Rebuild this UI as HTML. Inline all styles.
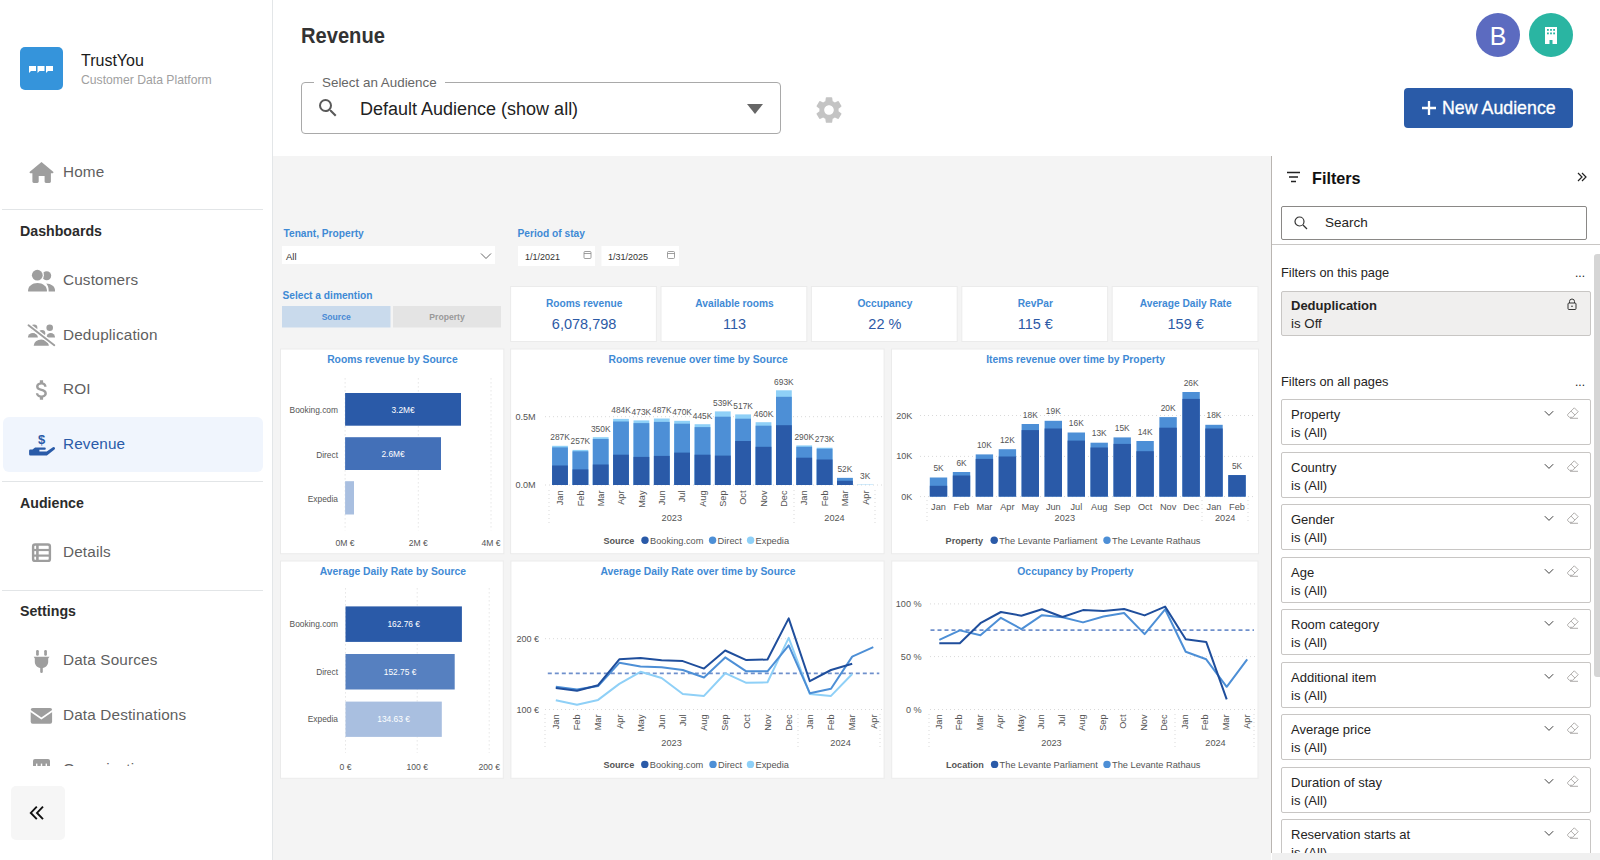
<!DOCTYPE html>
<html><head><meta charset="utf-8">
<style>
*{box-sizing:border-box;margin:0;padding:0}
html,body{width:1600px;height:860px;overflow:hidden;background:#fff;font-family:"Liberation Sans",sans-serif;position:relative}
.a{position:absolute}
.nav{position:absolute;left:63px;font-size:15.3px;letter-spacing:0.15px;color:#5f5f5f;line-height:18px;white-space:nowrap}
.sec{position:absolute;left:20px;font-size:14.2px;font-weight:bold;color:#2b2b2b;line-height:18px}
.div{position:absolute;left:2px;width:261px;height:1px;background:#e2e5e7}
.ico{position:absolute;fill:#9e9e9e}
.fcard{position:absolute;left:1281px;width:310px;height:46px;border:1px solid #c8c6c4;border-radius:2px;background:#fff}
.fcard .t{position:absolute;left:9px;top:6.5px;font-size:13px;color:#252423;line-height:16px;white-space:nowrap}
.fcard .s{position:absolute;left:9px;top:24.5px;font-size:13px;color:#252423;line-height:16px;white-space:nowrap}
.fcard svg{position:absolute}
.kpi{position:absolute;top:286px;width:146px;height:55px;background:#fff;border:1px solid #e8e8e8}
.kpi .t{position:absolute;left:0;right:0;top:11px;text-align:center;font-size:10.3px;font-weight:bold;color:#3f8ad5;line-height:12px}
.kpi .v{position:absolute;left:0;right:0;top:29px;text-align:center;font-size:14.5px;color:#2c5aa6;line-height:17px}
.panel{position:absolute;background:#fff;border:1px solid #e6e6e6}
</style></head><body>
<!-- SIDEBAR -->
<div class="a" style="left:0;top:0;width:272px;height:860px;background:#fff"></div>
<div class="a" style="left:272px;top:0;width:1px;height:860px;background:#e3e6e8"></div>
<div class="a" style="left:20px;top:47px;width:43px;height:43px;border-radius:5px;background:#3594db"></div>
<svg class="a" style="left:20px;top:47px" width="43" height="43" viewBox="0 0 43 43">
<g fill="#fff"><path d="M9 19h7v5h-5l-2 2z"/><path d="M17.5 19h7v5h-5l-2 2z"/><path d="M26 19h7v5h-5l-2 2z"/></g></svg>
<div class="a" style="left:81px;top:52px;font-size:16px;color:#1b1b1b;line-height:18px">TrustYou</div>
<div class="a" style="left:81px;top:73px;font-size:12.2px;color:#a0a0a0;line-height:14px">Customer Data Platform</div>

<svg class="ico" style="left:22px;top:155px" width="38" height="35" viewBox="0 0 38 35"><path d="M19.5 6.9L31.2 16.8c.5.5.2 1.4-.5 1.4H28.9V26.6c0 .8-.6 1.4-1.4 1.4h-3.5c-.8 0-1.4-.6-1.4-1.4V20.9h-5.9V26.6c0 .8-.6 1.4-1.4 1.4h-3.5c-.8 0-1.4-.6-1.4-1.4V18.2H8.3c-.7 0-1-.9-.5-1.4z"/></svg>
<div class="nav" style="top:163px">Home</div>
<div class="div" style="top:209px"></div>
<div class="sec" style="top:222px">Dashboards</div>

<svg class="ico" style="left:22px;top:262px" width="40" height="36" viewBox="0 0 40 36"><circle cx="24.7" cy="13.8" r="4.5"/><circle cx="15.3" cy="13.2" r="6.6" fill="#fff"/><circle cx="15.3" cy="13.2" r="5.4"/><path d="M6.1 29.5v-1.2c0-4.1 4.2-7.4 9.4-7.4s9.4 3.3 9.4 7.4v1.2z"/><path d="M24.3 21.5c4.6.3 8.7 2.7 8.7 6.5v1.5h-6.4v-1.5c0-2.5-.8-4.8-2.3-6.5z"/></svg>
<div class="nav" style="top:271px">Customers</div>

<svg class="ico" style="left:22px;top:318px" width="40" height="34" viewBox="0 0 40 34"><circle cx="12.1" cy="9.9" r="3.3"/><circle cx="27.7" cy="9.7" r="3.3"/><circle cx="20" cy="15.2" r="3.3"/><path d="M5.9 19.6a5 4.6 0 0 1 10 0z"/><path d="M24.5 19.6a4.25 4.6 0 0 1 8.5 0z"/><path d="M11.7 27.7a7.6 6.2 0 0 1 15.2 0z"/><line x1="6.3" y1="7.1" x2="32.4" y2="27.3" stroke="#fff" stroke-width="4.6"/><line x1="6.5" y1="7.3" x2="32.3" y2="27.2" stroke="#9e9e9e" stroke-width="1.9" stroke-linecap="round"/></svg>
<div class="nav" style="top:326px">Deduplication</div>

<svg class="ico" style="left:29px;top:376px" width="26" height="28" viewBox="0 0 24 24"><path d="M11.8 10.9c-2.27-.59-3-1.2-3-2.15 0-1.09 1.01-1.85 2.7-1.85 1.78 0 2.44.85 2.5 2.1h2.21c-.07-1.72-1.12-3.3-3.21-3.81V3h-3v2.16c-1.94.42-3.5 1.68-3.5 3.61 0 2.31 1.91 3.46 4.7 4.13 2.5.6 3 1.48 3 2.41 0 .69-.49 1.79-2.7 1.79-2.06 0-2.87-.92-2.98-2.1h-2.2c.12 2.19 1.76 3.42 3.68 3.83V21h3v-2.15c1.95-.37 3.5-1.5 3.5-3.55 0-2.84-2.43-3.81-4.7-4.4z"/></svg>
<div class="nav" style="top:380px">ROI</div>

<div class="a" style="left:3px;top:417px;width:260px;height:55px;border-radius:6px;background:#f0f5fd"></div>
<svg class="a" style="left:24px;top:428px" width="36" height="34" viewBox="0 0 36 34"><g fill="#2a5ba8"><path d="M5.1 22.8q0-1.2 1.2-1.2h2.2l2.6-2h9.6a1.1 1.1 0 0 1 0 2.2h-5.3v1.8h7.3l6.2-4.3a1.3 1.3 0 0 1 1.6 2.1l-7.6 6.1h-16.6q-1.2 0-1.2-1.2z"/><text x="17.5" y="15.6" font-family="Liberation Sans" font-weight="bold" font-size="13" text-anchor="middle">$</text></g></svg>
<div class="nav" style="top:435px;color:#2a5ba8">Revenue</div>
<div class="div" style="top:481px"></div>
<div class="sec" style="top:494px">Audience</div>

<svg class="a" style="left:24px;top:536px" width="36" height="34" viewBox="0 0 36 34"><g fill="none" stroke="#9e9e9e"><rect x="9.1" y="8.5" width="16.8" height="16.4" rx="2" stroke-width="2.4"/><line x1="13.4" y1="8.3" x2="13.4" y2="25.1" stroke-width="2.6"/><line x1="8.9" y1="14" x2="26.1" y2="14" stroke-width="2.2"/><line x1="8.9" y1="19.6" x2="26.1" y2="19.6" stroke-width="2.2"/></g></svg>
<div class="nav" style="top:543px">Details</div>
<div class="div" style="top:590px"></div>
<div class="sec" style="top:602px">Settings</div>

<svg class="ico" style="left:24px;top:644px" width="36" height="34" viewBox="0 0 36 34"><rect x="12.1" y="6.1" width="2.7" height="5.6" rx="1.2"/><rect x="20.2" y="6.1" width="2.7" height="5.6" rx="1.2"/><path d="M9.7 12.8h15.8l-1.3 1.8v3.2c0 3.3-2.5 5.9-5.4 6.3v3.6a1.3 1.3 0 0 1-2.6 0v-3.6c-2.9-.4-5.4-3-5.4-6.3v-3.2z"/></svg>
<div class="nav" style="top:651px">Data Sources</div>
<svg class="ico" style="left:24px;top:698px" width="36" height="34" viewBox="0 0 36 34"><rect x="6.7" y="9.9" width="21.4" height="15.8" rx="2"/><polyline points="5.5,12.2 17.4,20.5 29.3,12.2" fill="none" stroke="#fff" stroke-width="1.7"/></svg>
<div class="nav" style="top:706px">Data Destinations</div>
<div class="a" style="left:0;top:750px;width:272px;height:16px;overflow:hidden">
<svg class="ico" style="left:33px;top:9.4px" width="17" height="10" viewBox="0 0 17 10"><path d="M0 2a2 2 0 0 1 2-2h13a2 2 0 0 1 2 2v8H0z"/><rect x="3" y="4.6" width="1.4" height="6" fill="#fff"/><rect x="7.8" y="4.6" width="1.4" height="6" fill="#fff"/><rect x="12.6" y="4.6" width="1.4" height="6" fill="#fff"/></svg>
<div class="nav" style="top:10px">Organization</div>
</div>
<div class="a" style="left:11px;top:786px;width:54px;height:54px;border-radius:5px;background:#f6f6f6"></div>
<svg class="a" style="left:26px;top:801px" width="24" height="24" viewBox="0 0 24 24"><path d="M10.8 5.6 4.8 11.9l6 6.3M17 5.6l-6 6.3 6 6.3" fill="none" stroke="#111" stroke-width="1.9"/></svg>

<!-- HEADER -->
<div class="a" style="left:301px;top:23px;font-size:22px;font-weight:bold;color:#333;line-height:26px;transform:scaleX(0.915);transform-origin:0 0">Revenue</div>
<div class="a" style="left:301px;top:82px;width:480px;height:52px;border:1px solid #a9a9a9;border-radius:4px"></div>
<div class="a" style="left:314px;top:76px;height:14px;background:#fff;padding:0 8px;font-size:13.4px;color:#666;line-height:14px">Select an Audience</div>
<svg class="a" style="left:316px;top:96px" width="24" height="24" viewBox="0 0 24 24"><path d="M15.5 14h-.79l-.28-.27A6.47 6.47 0 0 0 16 9.5 6.5 6.5 0 1 0 9.5 16c1.61 0 3.09-.59 4.23-1.57l.27.28v.79l5 4.99L20.49 19zm-6 0C7.01 14 5 11.99 5 9.5S7.01 5 9.5 5 14 7.01 14 9.5 11.99 14 9.5 14z" fill="#5a5a5a"/></svg>
<div class="a" style="left:360px;top:99px;font-size:18px;color:#222;line-height:20px">Default Audience (show all)</div>
<svg class="a" style="left:746px;top:104px" width="18" height="11" viewBox="0 0 18 11"><path d="M1 0h16L9 10z" fill="#666"/></svg>
<svg class="a" style="left:813px;top:94px" width="32" height="32" viewBox="0 0 24 24"><path fill="#c4c4c4" d="M19.14 12.94c.04-.3.06-.61.06-.94 0-.32-.02-.64-.07-.94l2.03-1.58a.49.49 0 0 0 .12-.61l-1.92-3.32a.488.488 0 0 0-.59-.22l-2.39.96c-.5-.38-1.03-.7-1.62-.94l-.36-2.54a.484.484 0 0 0-.48-.41h-3.84c-.24 0-.43.17-.47.41l-.36 2.54c-.59.24-1.13.57-1.62.94l-2.39-.96a.49.49 0 0 0-.59.22L2.74 8.87c-.12.21-.08.47.12.61l2.03 1.58c-.05.3-.09.63-.09.94s.02.64.07.94l-2.03 1.58a.49.49 0 0 0-.12.61l1.92 3.32c.12.22.37.29.59.22l2.39-.96c.5.38 1.03.7 1.62.94l.36 2.54c.05.24.24.41.48.41h3.84c.24 0 .44-.17.47-.41l.36-2.54c.59-.24 1.13-.56 1.62-.94l2.39.96c.22.08.47 0 .59-.22l1.92-3.32c.12-.22.07-.47-.12-.61zM12 15.6c-1.98 0-3.6-1.62-3.6-3.6s1.62-3.6 3.6-3.6 3.6 1.62 3.6 3.6-1.62 3.6-3.6 3.6z"/></svg>

<div class="a" style="left:1476px;top:13px;width:44px;height:44px;border-radius:50%;background:#5c6bc0;color:#fff;font-size:25px;line-height:46px;text-align:center">B</div>
<div class="a" style="left:1529px;top:13px;width:44px;height:44px;border-radius:50%;background:#2ab5a2"></div>
<svg class="a" style="left:1542px;top:26px" width="18" height="18" viewBox="0 0 18 18"><path fill="#fff" d="M3 1h12v17h-4.5v-4h-3v4H3z"/><g fill="#2ab5a2"><rect x="5" y="3" width="1.8" height="1.8"/><rect x="8.1" y="3" width="1.8" height="1.8"/><rect x="11.2" y="3" width="1.8" height="1.8"/><rect x="5" y="6.5" width="1.8" height="1.8"/><rect x="8.1" y="6.5" width="1.8" height="1.8"/><rect x="11.2" y="6.5" width="1.8" height="1.8"/></g></svg>

<div class="a" style="left:1404px;top:88px;width:169px;height:40px;border-radius:4px;background:#2a5ba8"></div>
<svg class="a" style="left:1421px;top:99px" width="16" height="18" viewBox="0 0 16 18"><path d="M8 2v14M1 9h14" stroke="#fff" stroke-width="2.3"/></svg>
<div class="a" style="left:1442px;top:98px;font-size:17.8px;color:#fff;line-height:20px;font-weight:normal;-webkit-text-stroke:0.3px #fff">New Audience</div>

<!-- DASHBOARD BG -->
<div class="a" style="left:273px;top:156px;width:998px;height:704px;background:#f4f4f4"></div>

<!-- FILTER PANE -->
<div class="a" style="left:1271px;top:156px;width:1px;height:697px;background:#b9b5b1"></div>
<svg class="a" style="left:1286px;top:171px" width="16" height="13" viewBox="0 0 16 13"><path d="M1 1.5h13M3 6h9M5 10.5h5" stroke="#222" stroke-width="1.6"/></svg>
<div class="a" style="left:1312px;top:168px;font-size:16.2px;font-weight:bold;color:#111;line-height:20px">Filters</div>
<svg class="a" style="left:1576px;top:171px" width="12" height="12" viewBox="0 0 12 12"><path d="M2 2l4 4-4 4M6 2l4 4-4 4" fill="none" stroke="#222" stroke-width="1.2"/></svg>
<div class="a" style="left:1281px;top:206px;width:306px;height:34px;border:1px solid #8a8886;border-radius:2px"></div>
<svg class="a" style="left:1294px;top:216px" width="14" height="14" viewBox="0 0 14 14"><circle cx="5.5" cy="5.5" r="4.5" fill="none" stroke="#333" stroke-width="1.2"/><path d="M9 9l4 4" stroke="#333" stroke-width="1.3"/></svg>
<div class="a" style="left:1325px;top:214px;font-size:13.5px;color:#252423;line-height:17px">Search</div>
<div class="a" style="left:1272px;top:244px;width:328px;height:1px;background:#c8c6c4"></div>
<div class="a" style="left:1281px;top:265px;font-size:12.8px;color:#252423;line-height:16px">Filters on this page</div>
<div class="a" style="left:1575px;top:265px;font-size:12px;color:#252423;line-height:16px">...</div>
<div class="a" style="left:1281px;top:291px;width:310px;height:45px;border:1px solid #c8c6c4;border-radius:2px;background:#f0efee"></div>
<div class="a" style="left:1291px;top:298px;font-size:13px;font-weight:bold;color:#252423;line-height:16px">Deduplication</div>
<div class="a" style="left:1291px;top:316px;font-size:13.3px;color:#252423;line-height:16px">is Off</div>
<svg class="a" style="left:1566px;top:298px" width="12" height="12" viewBox="0 0 12 12"><path d="M3.5 5V3.5a2.5 2.5 0 0 1 5 0V5" fill="none" stroke="#333" stroke-width="1"/><rect x="2" y="5" width="8" height="6.5" rx="1" fill="none" stroke="#333" stroke-width="1"/><circle cx="6" cy="8.2" r=".8" fill="#333"/></svg>
<div class="a" style="left:1281px;top:374px;font-size:12.8px;color:#252423;line-height:16px">Filters on all pages</div>
<div class="a" style="left:1575px;top:374px;font-size:12px;color:#252423;line-height:16px">...</div>
<div class="a" style="left:1272px;top:245px;width:320px;height:608px;overflow:hidden">
<div class="fcard" style="left:9px;top:154px"><div class="t">Property</div><div class="s">is (All)</div><svg style="left:261px;top:7px" width="12" height="12" viewBox="0 0 12 12"><path d="M1.8 4.2l4.2 4.2 4.2-4.2" fill="none" stroke="#333" stroke-width="0.95"/></svg><svg style="left:284px;top:6px" width="14" height="14" viewBox="0 0 14 14"><path d="M8.3 1.8l3.9 3.9-5.6 5.6H3.4L1.8 9.7c-.4-.4-.4-1 0-1.4zM5 5.1l3.9 3.9M4 12.3h8" fill="none" stroke="#9a9896" stroke-width="0.8"/></svg></div>
<div class="fcard" style="left:9px;top:207px"><div class="t">Country</div><div class="s">is (All)</div><svg style="left:261px;top:7px" width="12" height="12" viewBox="0 0 12 12"><path d="M1.8 4.2l4.2 4.2 4.2-4.2" fill="none" stroke="#333" stroke-width="0.95"/></svg><svg style="left:284px;top:6px" width="14" height="14" viewBox="0 0 14 14"><path d="M8.3 1.8l3.9 3.9-5.6 5.6H3.4L1.8 9.7c-.4-.4-.4-1 0-1.4zM5 5.1l3.9 3.9M4 12.3h8" fill="none" stroke="#9a9896" stroke-width="0.8"/></svg></div>
<div class="fcard" style="left:9px;top:259px"><div class="t">Gender</div><div class="s">is (All)</div><svg style="left:261px;top:7px" width="12" height="12" viewBox="0 0 12 12"><path d="M1.8 4.2l4.2 4.2 4.2-4.2" fill="none" stroke="#333" stroke-width="0.95"/></svg><svg style="left:284px;top:6px" width="14" height="14" viewBox="0 0 14 14"><path d="M8.3 1.8l3.9 3.9-5.6 5.6H3.4L1.8 9.7c-.4-.4-.4-1 0-1.4zM5 5.1l3.9 3.9M4 12.3h8" fill="none" stroke="#9a9896" stroke-width="0.8"/></svg></div>
<div class="fcard" style="left:9px;top:312px"><div class="t">Age</div><div class="s">is (All)</div><svg style="left:261px;top:7px" width="12" height="12" viewBox="0 0 12 12"><path d="M1.8 4.2l4.2 4.2 4.2-4.2" fill="none" stroke="#333" stroke-width="0.95"/></svg><svg style="left:284px;top:6px" width="14" height="14" viewBox="0 0 14 14"><path d="M8.3 1.8l3.9 3.9-5.6 5.6H3.4L1.8 9.7c-.4-.4-.4-1 0-1.4zM5 5.1l3.9 3.9M4 12.3h8" fill="none" stroke="#9a9896" stroke-width="0.8"/></svg></div>
<div class="fcard" style="left:9px;top:364px"><div class="t">Room category</div><div class="s">is (All)</div><svg style="left:261px;top:7px" width="12" height="12" viewBox="0 0 12 12"><path d="M1.8 4.2l4.2 4.2 4.2-4.2" fill="none" stroke="#333" stroke-width="0.95"/></svg><svg style="left:284px;top:6px" width="14" height="14" viewBox="0 0 14 14"><path d="M8.3 1.8l3.9 3.9-5.6 5.6H3.4L1.8 9.7c-.4-.4-.4-1 0-1.4zM5 5.1l3.9 3.9M4 12.3h8" fill="none" stroke="#9a9896" stroke-width="0.8"/></svg></div>
<div class="fcard" style="left:9px;top:417px"><div class="t">Additional item</div><div class="s">is (All)</div><svg style="left:261px;top:7px" width="12" height="12" viewBox="0 0 12 12"><path d="M1.8 4.2l4.2 4.2 4.2-4.2" fill="none" stroke="#333" stroke-width="0.95"/></svg><svg style="left:284px;top:6px" width="14" height="14" viewBox="0 0 14 14"><path d="M8.3 1.8l3.9 3.9-5.6 5.6H3.4L1.8 9.7c-.4-.4-.4-1 0-1.4zM5 5.1l3.9 3.9M4 12.3h8" fill="none" stroke="#9a9896" stroke-width="0.8"/></svg></div>
<div class="fcard" style="left:9px;top:469px"><div class="t">Average price</div><div class="s">is (All)</div><svg style="left:261px;top:7px" width="12" height="12" viewBox="0 0 12 12"><path d="M1.8 4.2l4.2 4.2 4.2-4.2" fill="none" stroke="#333" stroke-width="0.95"/></svg><svg style="left:284px;top:6px" width="14" height="14" viewBox="0 0 14 14"><path d="M8.3 1.8l3.9 3.9-5.6 5.6H3.4L1.8 9.7c-.4-.4-.4-1 0-1.4zM5 5.1l3.9 3.9M4 12.3h8" fill="none" stroke="#9a9896" stroke-width="0.8"/></svg></div>
<div class="fcard" style="left:9px;top:522px"><div class="t">Duration of stay</div><div class="s">is (All)</div><svg style="left:261px;top:7px" width="12" height="12" viewBox="0 0 12 12"><path d="M1.8 4.2l4.2 4.2 4.2-4.2" fill="none" stroke="#333" stroke-width="0.95"/></svg><svg style="left:284px;top:6px" width="14" height="14" viewBox="0 0 14 14"><path d="M8.3 1.8l3.9 3.9-5.6 5.6H3.4L1.8 9.7c-.4-.4-.4-1 0-1.4zM5 5.1l3.9 3.9M4 12.3h8" fill="none" stroke="#9a9896" stroke-width="0.8"/></svg></div>
<div class="fcard" style="left:9px;top:574px"><div class="t">Reservation starts at</div><div class="s">is (All)</div><svg style="left:261px;top:7px" width="12" height="12" viewBox="0 0 12 12"><path d="M1.8 4.2l4.2 4.2 4.2-4.2" fill="none" stroke="#333" stroke-width="0.95"/></svg><svg style="left:284px;top:6px" width="14" height="14" viewBox="0 0 14 14"><path d="M8.3 1.8l3.9 3.9-5.6 5.6H3.4L1.8 9.7c-.4-.4-.4-1 0-1.4zM5 5.1l3.9 3.9M4 12.3h8" fill="none" stroke="#9a9896" stroke-width="0.8"/></svg></div>
</div>
<div class="a" style="left:1594px;top:254px;width:6px;height:423px;border-radius:3px 0 0 3px;background:#d5d5d5"></div>
<div class="a" style="left:1272px;top:853px;width:328px;height:7px;background:#f0f0f0"></div>

<!-- DASHBOARD CONTENT -->
<svg class="a" style="left:273px;top:156px" width="998" height="704" viewBox="273 156 998 704" font-family="Liberation Sans"><text x="283.5" y="237.2" font-size="10.2" fill="#3f8ad5" text-anchor="start" font-weight="bold" >Tenant, Property</text>
<rect x="282.0" y="246.0" width="213.0" height="18.0" fill="#fff" />
<text x="286.0" y="259.5" font-size="9.5" fill="#333" text-anchor="start" font-weight="normal" >All</text>
<path d="M481 253.5l5 5 5-5" fill="none" stroke="#555" stroke-width="0.9"/>
<text x="517.5" y="237.2" font-size="10.2" fill="#3f8ad5" text-anchor="start" font-weight="bold" >Period of stay</text>
<rect x="518.0" y="246.0" width="77.0" height="20.0" fill="#fff" />
<rect x="601.5" y="246.0" width="77.5" height="20.0" fill="#fff" />
<text x="525.0" y="259.5" font-size="9" fill="#333" text-anchor="start" font-weight="normal" >1/1/2021</text>
<text x="608.0" y="259.5" font-size="9" fill="#333" text-anchor="start" font-weight="normal" >1/31/2025</text>
<rect x="584.0" y="251.5" width="7" height="7" rx="1" fill="none" stroke="#888" stroke-width="0.8"/><line x1="584.0" y1="253.5" x2="591.0" y2="253.5" stroke="#888" stroke-width="0.8"/>
<rect x="667.5" y="251.5" width="7" height="7" rx="1" fill="none" stroke="#888" stroke-width="0.8"/><line x1="667.5" y1="253.5" x2="674.5" y2="253.5" stroke="#888" stroke-width="0.8"/>
<text x="282.5" y="299.3" font-size="10.2" fill="#3f8ad5" text-anchor="start" font-weight="bold" >Select a dimention</text>
<rect x="282.0" y="306.0" width="108.5" height="21.5" fill="#c9daec" />
<rect x="393.0" y="306.0" width="108.0" height="21.5" fill="#e4e4e4" />
<text x="336.2" y="320.0" font-size="8.6" fill="#4a8ad4" text-anchor="middle" font-weight="bold" >Source</text>
<text x="447.0" y="320.0" font-size="8.6" fill="#999" text-anchor="middle" font-weight="bold" >Property</text>
<rect x="510.6" y="286.5" width="145.8" height="55" fill="#fff" stroke="#ebebeb" stroke-width="1"/>
<text x="584.1" y="306.8" font-size="10.2" fill="#3f8ad5" text-anchor="middle" font-weight="bold" >Rooms revenue</text>
<text x="584.1" y="328.8" font-size="14.5" fill="#2c5aa6" text-anchor="middle" font-weight="normal" >6,078,798</text>
<rect x="661.0" y="286.5" width="145.8" height="55" fill="#fff" stroke="#ebebeb" stroke-width="1"/>
<text x="734.5" y="306.8" font-size="10.2" fill="#3f8ad5" text-anchor="middle" font-weight="bold" >Available rooms</text>
<text x="734.5" y="328.8" font-size="14.5" fill="#2c5aa6" text-anchor="middle" font-weight="normal" >113</text>
<rect x="811.4" y="286.5" width="145.8" height="55" fill="#fff" stroke="#ebebeb" stroke-width="1"/>
<text x="884.9" y="306.8" font-size="10.2" fill="#3f8ad5" text-anchor="middle" font-weight="bold" >Occupancy</text>
<text x="884.9" y="328.8" font-size="14.5" fill="#2c5aa6" text-anchor="middle" font-weight="normal" >22 %</text>
<rect x="961.8" y="286.5" width="145.8" height="55" fill="#fff" stroke="#ebebeb" stroke-width="1"/>
<text x="1035.3" y="306.8" font-size="10.2" fill="#3f8ad5" text-anchor="middle" font-weight="bold" >RevPar</text>
<text x="1035.3" y="328.8" font-size="14.5" fill="#2c5aa6" text-anchor="middle" font-weight="normal" >115 €</text>
<rect x="1112.2" y="286.5" width="145.8" height="55" fill="#fff" stroke="#ebebeb" stroke-width="1"/>
<text x="1185.7" y="306.8" font-size="10.2" fill="#3f8ad5" text-anchor="middle" font-weight="bold" >Average Daily Rate</text>
<text x="1185.7" y="328.8" font-size="14.5" fill="#2c5aa6" text-anchor="middle" font-weight="normal" >159 €</text>
<rect x="280.5" y="349" width="223.3" height="204.7" fill="#fff" stroke="#ebebeb" stroke-width="1"/>
<rect x="510.6" y="349" width="373.5" height="204.7" fill="#fff" stroke="#ebebeb" stroke-width="1"/>
<rect x="891.5" y="349" width="367" height="204.7" fill="#fff" stroke="#ebebeb" stroke-width="1"/>
<rect x="280.5" y="561" width="222.8" height="217.3" fill="#fff" stroke="#ebebeb" stroke-width="1"/>
<rect x="510.9" y="561" width="373.2" height="217.3" fill="#fff" stroke="#ebebeb" stroke-width="1"/>
<rect x="891.7" y="561" width="366.3" height="217.3" fill="#fff" stroke="#ebebeb" stroke-width="1"/>
<text x="392.4" y="363.0" font-size="10.35" fill="#3f8ad5" text-anchor="middle" font-weight="bold" >Rooms revenue by Source</text>
<text x="698.1" y="363.0" font-size="10.35" fill="#3f8ad5" text-anchor="middle" font-weight="bold" >Rooms revenue over time by Source</text>
<text x="1075.6" y="363.0" font-size="10.35" fill="#3f8ad5" text-anchor="middle" font-weight="bold" >Items revenue over time by Property</text>
<text x="392.9" y="575.3" font-size="10.35" fill="#3f8ad5" text-anchor="middle" font-weight="bold" >Average Daily Rate by Source</text>
<text x="698.0" y="575.3" font-size="10.35" fill="#3f8ad5" text-anchor="middle" font-weight="bold" >Average Daily Rate over time by Source</text>
<text x="1075.4" y="575.3" font-size="10.35" fill="#3f8ad5" text-anchor="middle" font-weight="bold" >Occupancy by Property</text>
<line x1="345.1" y1="378.4" x2="345.1" y2="530.6" stroke="#d9d9d9" stroke-width="1" stroke-dasharray="1 3"/>
<line x1="418.3" y1="378.4" x2="418.3" y2="530.6" stroke="#d9d9d9" stroke-width="1" stroke-dasharray="1 3"/>
<line x1="491.0" y1="378.4" x2="491.0" y2="530.6" stroke="#d9d9d9" stroke-width="1" stroke-dasharray="1 3"/>
<rect x="345.1" y="393.0" width="115.9" height="32.7" fill="#2a5aa8" />
<text x="338.0" y="413.4" font-size="8.4" fill="#555" text-anchor="end" font-weight="normal" >Booking.com</text>
<text x="403.1" y="413.0" font-size="8.4" fill="#fff" text-anchor="middle" font-weight="normal" >3.2M€</text>
<rect x="345.1" y="437.2" width="95.9" height="32.8" fill="#4370b8" />
<text x="338.0" y="457.6" font-size="8.4" fill="#555" text-anchor="end" font-weight="normal" >Direct</text>
<text x="393.1" y="457.2" font-size="8.4" fill="#fff" text-anchor="middle" font-weight="normal" >2.6M€</text>
<rect x="345.1" y="481.2" width="8.9" height="33.3" fill="#a9bfe0" />
<text x="338.0" y="501.9" font-size="8.4" fill="#555" text-anchor="end" font-weight="normal" >Expedia</text>
<text x="345.1" y="545.8" font-size="8.6" fill="#555" text-anchor="middle" font-weight="normal" >0M €</text>
<text x="418.3" y="545.8" font-size="8.6" fill="#555" text-anchor="middle" font-weight="normal" >2M €</text>
<text x="491.0" y="545.8" font-size="8.6" fill="#555" text-anchor="middle" font-weight="normal" >4M €</text>
<line x1="545.0" y1="416.7" x2="882.0" y2="416.7" stroke="#d9d9d9" stroke-width="1" stroke-dasharray="1 3"/>
<line x1="545.0" y1="485.0" x2="882.0" y2="485.0" stroke="#d9d9d9" stroke-width="1" stroke-dasharray="1 3"/>
<text x="535.7" y="419.7" font-size="9.1" fill="#555" text-anchor="end" font-weight="normal" >0.5M</text>
<text x="535.7" y="488.0" font-size="9.1" fill="#555" text-anchor="end" font-weight="normal" >0.0M</text>
<rect x="552.1" y="445.8" width="15.8" height="39.2" fill="#8fd0f7" />
<rect x="552.1" y="447.4" width="15.8" height="37.6" fill="#4d8fd6" />
<rect x="552.1" y="465.5" width="15.8" height="19.5" fill="#2a5aa8" />
<text x="560.0" y="440.3" font-size="8.4" fill="#555" text-anchor="middle" font-weight="normal" >287K</text>
<text transform="translate(563.2,490.5) rotate(-90)" font-size="9.2" fill="#555" text-anchor="end">Jan</text>
<rect x="572.5" y="449.9" width="15.8" height="35.1" fill="#8fd0f7" />
<rect x="572.5" y="451.3" width="15.8" height="33.7" fill="#4d8fd6" />
<rect x="572.5" y="469.4" width="15.8" height="15.6" fill="#2a5aa8" />
<text x="580.4" y="444.4" font-size="8.4" fill="#555" text-anchor="middle" font-weight="normal" >257K</text>
<text transform="translate(583.6,490.5) rotate(-90)" font-size="9.2" fill="#555" text-anchor="end">Feb</text>
<rect x="592.8" y="437.2" width="15.8" height="47.8" fill="#8fd0f7" />
<rect x="592.8" y="439.0" width="15.8" height="46.0" fill="#4d8fd6" />
<rect x="592.8" y="464.5" width="15.8" height="20.5" fill="#2a5aa8" />
<text x="600.7" y="431.7" font-size="8.4" fill="#555" text-anchor="middle" font-weight="normal" >350K</text>
<text transform="translate(603.9,490.5) rotate(-90)" font-size="9.2" fill="#555" text-anchor="end">Mar</text>
<rect x="613.1" y="418.9" width="15.8" height="66.1" fill="#8fd0f7" />
<rect x="613.1" y="421.5" width="15.8" height="63.5" fill="#4d8fd6" />
<rect x="613.1" y="454.7" width="15.8" height="30.3" fill="#2a5aa8" />
<text x="621.0" y="413.4" font-size="8.4" fill="#555" text-anchor="middle" font-weight="normal" >484K</text>
<text transform="translate(624.2,490.5) rotate(-90)" font-size="9.2" fill="#555" text-anchor="end">Apr</text>
<rect x="633.5" y="420.4" width="15.8" height="64.6" fill="#8fd0f7" />
<rect x="633.5" y="423.1" width="15.8" height="61.9" fill="#4d8fd6" />
<rect x="633.5" y="456.9" width="15.8" height="28.1" fill="#2a5aa8" />
<text x="641.4" y="414.9" font-size="8.4" fill="#555" text-anchor="middle" font-weight="normal" >473K</text>
<text transform="translate(644.6,490.5) rotate(-90)" font-size="9.2" fill="#555" text-anchor="end">May</text>
<rect x="653.9" y="418.5" width="15.8" height="66.5" fill="#8fd0f7" />
<rect x="653.9" y="421.9" width="15.8" height="63.1" fill="#4d8fd6" />
<rect x="653.9" y="455.9" width="15.8" height="29.1" fill="#2a5aa8" />
<text x="661.8" y="413.0" font-size="8.4" fill="#555" text-anchor="middle" font-weight="normal" >487K</text>
<text transform="translate(665.0,490.5) rotate(-90)" font-size="9.2" fill="#555" text-anchor="end">Jun</text>
<rect x="674.2" y="420.8" width="15.8" height="64.2" fill="#8fd0f7" />
<rect x="674.2" y="423.7" width="15.8" height="61.3" fill="#4d8fd6" />
<rect x="674.2" y="452.6" width="15.8" height="32.4" fill="#2a5aa8" />
<text x="682.1" y="415.3" font-size="8.4" fill="#555" text-anchor="middle" font-weight="normal" >470K</text>
<text transform="translate(685.3,490.5) rotate(-90)" font-size="9.2" fill="#555" text-anchor="end">Jul</text>
<rect x="694.6" y="424.2" width="15.8" height="60.8" fill="#8fd0f7" />
<rect x="694.6" y="427.1" width="15.8" height="57.9" fill="#4d8fd6" />
<rect x="694.6" y="454.7" width="15.8" height="30.3" fill="#2a5aa8" />
<text x="702.5" y="418.7" font-size="8.4" fill="#555" text-anchor="middle" font-weight="normal" >445K</text>
<text transform="translate(705.7,490.5) rotate(-90)" font-size="9.2" fill="#555" text-anchor="end">Aug</text>
<rect x="714.9" y="411.4" width="15.8" height="73.6" fill="#8fd0f7" />
<rect x="714.9" y="416.7" width="15.8" height="68.3" fill="#4d8fd6" />
<rect x="714.9" y="455.6" width="15.8" height="29.4" fill="#2a5aa8" />
<text x="722.8" y="405.9" font-size="8.4" fill="#555" text-anchor="middle" font-weight="normal" >539K</text>
<text transform="translate(726.0,490.5) rotate(-90)" font-size="9.2" fill="#555" text-anchor="end">Sep</text>
<rect x="735.2" y="414.4" width="15.8" height="70.6" fill="#8fd0f7" />
<rect x="735.2" y="418.7" width="15.8" height="66.3" fill="#4d8fd6" />
<rect x="735.2" y="441.0" width="15.8" height="44.0" fill="#2a5aa8" />
<text x="743.1" y="408.9" font-size="8.4" fill="#555" text-anchor="middle" font-weight="normal" >517K</text>
<text transform="translate(746.4,490.5) rotate(-90)" font-size="9.2" fill="#555" text-anchor="end">Oct</text>
<rect x="755.6" y="422.2" width="15.8" height="62.8" fill="#8fd0f7" />
<rect x="755.6" y="425.7" width="15.8" height="59.3" fill="#4d8fd6" />
<rect x="755.6" y="446.8" width="15.8" height="38.2" fill="#2a5aa8" />
<text x="763.5" y="416.7" font-size="8.4" fill="#555" text-anchor="middle" font-weight="normal" >460K</text>
<text transform="translate(766.7,490.5) rotate(-90)" font-size="9.2" fill="#555" text-anchor="end">Nov</text>
<rect x="776.0" y="390.3" width="15.8" height="94.7" fill="#8fd0f7" />
<rect x="776.0" y="396.8" width="15.8" height="88.2" fill="#4d8fd6" />
<rect x="776.0" y="425.2" width="15.8" height="59.8" fill="#2a5aa8" />
<text x="783.9" y="384.8" font-size="8.4" fill="#555" text-anchor="middle" font-weight="normal" >693K</text>
<text transform="translate(787.1,490.5) rotate(-90)" font-size="9.2" fill="#555" text-anchor="end">Dec</text>
<rect x="796.3" y="445.4" width="15.8" height="39.6" fill="#8fd0f7" />
<rect x="796.3" y="446.8" width="15.8" height="38.2" fill="#4d8fd6" />
<rect x="796.3" y="457.7" width="15.8" height="27.3" fill="#2a5aa8" />
<text x="804.2" y="439.9" font-size="8.4" fill="#555" text-anchor="middle" font-weight="normal" >290K</text>
<text transform="translate(807.4,490.5) rotate(-90)" font-size="9.2" fill="#555" text-anchor="end">Jan</text>
<rect x="816.7" y="447.7" width="15.8" height="37.3" fill="#8fd0f7" />
<rect x="816.7" y="448.7" width="15.8" height="36.3" fill="#4d8fd6" />
<rect x="816.7" y="459.5" width="15.8" height="25.5" fill="#2a5aa8" />
<text x="824.6" y="442.2" font-size="8.4" fill="#555" text-anchor="middle" font-weight="normal" >273K</text>
<text transform="translate(827.8,490.5) rotate(-90)" font-size="9.2" fill="#555" text-anchor="end">Feb</text>
<rect x="837.0" y="477.9" width="15.8" height="7.1" fill="#8fd0f7" />
<rect x="837.0" y="477.9" width="15.8" height="7.1" fill="#4d8fd6" />
<rect x="837.0" y="480.8" width="15.8" height="4.2" fill="#2a5aa8" />
<text x="844.9" y="472.4" font-size="8.4" fill="#555" text-anchor="middle" font-weight="normal" >52K</text>
<text transform="translate(848.1,490.5) rotate(-90)" font-size="9.2" fill="#555" text-anchor="end">Mar</text>
<rect x="857.4" y="484.6" width="15.8" height="0.4" fill="#8fd0f7" />
<text x="865.2" y="479.1" font-size="8.4" fill="#555" text-anchor="middle" font-weight="normal" >3K</text>
<text transform="translate(868.5,490.5) rotate(-90)" font-size="9.2" fill="#555" text-anchor="end">Apr</text>
<line x1="549.0" y1="490.0" x2="549.0" y2="524.0" stroke="#d9d9d9" stroke-width="1" stroke-dasharray="1 3"/>
<line x1="794.0" y1="490.0" x2="794.0" y2="524.0" stroke="#d9d9d9" stroke-width="1" stroke-dasharray="1 3"/>
<line x1="875.0" y1="490.0" x2="875.0" y2="524.0" stroke="#d9d9d9" stroke-width="1" stroke-dasharray="1 3"/>
<text x="671.8" y="521.0" font-size="9.2" fill="#555" text-anchor="middle" font-weight="normal" >2023</text>
<text x="834.5" y="521.0" font-size="9.2" fill="#555" text-anchor="middle" font-weight="normal" >2024</text>
<text x="603.5" y="543.6" font-size="9.1" fill="#555" text-anchor="start" font-weight="bold" >Source</text>
<circle cx="645" cy="540.3" r="3.7" fill="#2a5aa8"/>
<text x="650.0" y="543.6" font-size="9.25" fill="#555" text-anchor="start" font-weight="normal" >Booking.com</text>
<circle cx="712.6" cy="540.3" r="3.7" fill="#4d8fd6"/>
<text x="717.6" y="543.6" font-size="9.25" fill="#555" text-anchor="start" font-weight="normal" >Direct</text>
<circle cx="750.6" cy="540.3" r="3.7" fill="#8fd0f7"/>
<text x="755.6" y="543.6" font-size="9.25" fill="#555" text-anchor="start" font-weight="normal" >Expedia</text>
<line x1="920.0" y1="415.5" x2="1255.0" y2="415.5" stroke="#d9d9d9" stroke-width="1" stroke-dasharray="1 3"/>
<text x="912.4" y="418.5" font-size="9.1" fill="#555" text-anchor="end" font-weight="normal" >20K</text>
<line x1="920.0" y1="456.4" x2="1255.0" y2="456.4" stroke="#d9d9d9" stroke-width="1" stroke-dasharray="1 3"/>
<text x="912.4" y="459.4" font-size="9.1" fill="#555" text-anchor="end" font-weight="normal" >10K</text>
<line x1="920.0" y1="496.6" x2="1255.0" y2="496.6" stroke="#d9d9d9" stroke-width="1" stroke-dasharray="1 3"/>
<text x="912.4" y="499.6" font-size="9.1" fill="#555" text-anchor="end" font-weight="normal" >0K</text>
<rect x="929.8" y="477.5" width="17.4" height="19.1" fill="#4d8fd6" />
<rect x="929.8" y="485.8" width="17.4" height="10.8" fill="#2a5aa8" />
<text x="938.5" y="471.0" font-size="8.4" fill="#555" text-anchor="middle" font-weight="normal" >5K</text>
<text x="938.5" y="509.5" font-size="9.2" fill="#555" text-anchor="middle" font-weight="normal" >Jan</text>
<rect x="952.8" y="472.0" width="17.4" height="24.6" fill="#4d8fd6" />
<rect x="952.8" y="475.5" width="17.4" height="21.1" fill="#2a5aa8" />
<text x="961.5" y="465.5" font-size="8.4" fill="#555" text-anchor="middle" font-weight="normal" >6K</text>
<text x="961.5" y="509.5" font-size="9.2" fill="#555" text-anchor="middle" font-weight="normal" >Feb</text>
<rect x="975.7" y="454.4" width="17.4" height="42.2" fill="#4d8fd6" />
<rect x="975.7" y="458.9" width="17.4" height="37.7" fill="#2a5aa8" />
<text x="984.4" y="447.9" font-size="8.4" fill="#555" text-anchor="middle" font-weight="normal" >10K</text>
<text x="984.4" y="509.5" font-size="9.2" fill="#555" text-anchor="middle" font-weight="normal" >Mar</text>
<rect x="998.7" y="449.2" width="17.4" height="47.4" fill="#4d8fd6" />
<rect x="998.7" y="456.5" width="17.4" height="40.1" fill="#2a5aa8" />
<text x="1007.4" y="442.7" font-size="8.4" fill="#555" text-anchor="middle" font-weight="normal" >12K</text>
<text x="1007.4" y="509.5" font-size="9.2" fill="#555" text-anchor="middle" font-weight="normal" >Apr</text>
<rect x="1021.6" y="424.0" width="17.4" height="72.6" fill="#4d8fd6" />
<rect x="1021.6" y="430.1" width="17.4" height="66.5" fill="#2a5aa8" />
<text x="1030.3" y="417.5" font-size="8.4" fill="#555" text-anchor="middle" font-weight="normal" >18K</text>
<text x="1030.3" y="509.5" font-size="9.2" fill="#555" text-anchor="middle" font-weight="normal" >May</text>
<rect x="1044.6" y="420.8" width="17.4" height="75.8" fill="#4d8fd6" />
<rect x="1044.6" y="428.5" width="17.4" height="68.1" fill="#2a5aa8" />
<text x="1053.3" y="414.3" font-size="8.4" fill="#555" text-anchor="middle" font-weight="normal" >19K</text>
<text x="1053.3" y="509.5" font-size="9.2" fill="#555" text-anchor="middle" font-weight="normal" >Jun</text>
<rect x="1067.6" y="432.5" width="17.4" height="64.1" fill="#4d8fd6" />
<rect x="1067.6" y="440.6" width="17.4" height="56.0" fill="#2a5aa8" />
<text x="1076.3" y="426.0" font-size="8.4" fill="#555" text-anchor="middle" font-weight="normal" >16K</text>
<text x="1076.3" y="509.5" font-size="9.2" fill="#555" text-anchor="middle" font-weight="normal" >Jul</text>
<rect x="1090.5" y="442.7" width="17.4" height="53.9" fill="#4d8fd6" />
<rect x="1090.5" y="447.5" width="17.4" height="49.1" fill="#2a5aa8" />
<text x="1099.2" y="436.2" font-size="8.4" fill="#555" text-anchor="middle" font-weight="normal" >13K</text>
<text x="1099.2" y="509.5" font-size="9.2" fill="#555" text-anchor="middle" font-weight="normal" >Aug</text>
<rect x="1113.5" y="437.4" width="17.4" height="59.2" fill="#4d8fd6" />
<rect x="1113.5" y="443.9" width="17.4" height="52.7" fill="#2a5aa8" />
<text x="1122.2" y="430.9" font-size="8.4" fill="#555" text-anchor="middle" font-weight="normal" >15K</text>
<text x="1122.2" y="509.5" font-size="9.2" fill="#555" text-anchor="middle" font-weight="normal" >Sep</text>
<rect x="1136.4" y="441.0" width="17.4" height="55.6" fill="#4d8fd6" />
<rect x="1136.4" y="451.2" width="17.4" height="45.4" fill="#2a5aa8" />
<text x="1145.1" y="434.5" font-size="8.4" fill="#555" text-anchor="middle" font-weight="normal" >14K</text>
<text x="1145.1" y="509.5" font-size="9.2" fill="#555" text-anchor="middle" font-weight="normal" >Oct</text>
<rect x="1159.4" y="417.1" width="17.4" height="79.5" fill="#4d8fd6" />
<rect x="1159.4" y="427.7" width="17.4" height="68.9" fill="#2a5aa8" />
<text x="1168.1" y="410.6" font-size="8.4" fill="#555" text-anchor="middle" font-weight="normal" >20K</text>
<text x="1168.1" y="509.5" font-size="9.2" fill="#555" text-anchor="middle" font-weight="normal" >Nov</text>
<rect x="1182.4" y="392.0" width="17.4" height="104.6" fill="#4d8fd6" />
<rect x="1182.4" y="398.9" width="17.4" height="97.7" fill="#2a5aa8" />
<text x="1191.1" y="385.5" font-size="8.4" fill="#555" text-anchor="middle" font-weight="normal" >26K</text>
<text x="1191.1" y="509.5" font-size="9.2" fill="#555" text-anchor="middle" font-weight="normal" >Dec</text>
<rect x="1205.3" y="424.8" width="17.4" height="71.8" fill="#4d8fd6" />
<rect x="1205.3" y="428.5" width="17.4" height="68.1" fill="#2a5aa8" />
<text x="1214.0" y="418.3" font-size="8.4" fill="#555" text-anchor="middle" font-weight="normal" >18K</text>
<text x="1214.0" y="509.5" font-size="9.2" fill="#555" text-anchor="middle" font-weight="normal" >Jan</text>
<rect x="1228.3" y="475.1" width="17.4" height="21.5" fill="#4d8fd6" />
<rect x="1228.3" y="475.1" width="17.4" height="21.5" fill="#2a5aa8" />
<text x="1237.0" y="468.6" font-size="8.4" fill="#555" text-anchor="middle" font-weight="normal" >5K</text>
<text x="1237.0" y="509.5" font-size="9.2" fill="#555" text-anchor="middle" font-weight="normal" >Feb</text>
<line x1="927.0" y1="500.0" x2="927.0" y2="524.0" stroke="#d9d9d9" stroke-width="1" stroke-dasharray="1 3"/>
<line x1="1202.0" y1="500.0" x2="1202.0" y2="524.0" stroke="#d9d9d9" stroke-width="1" stroke-dasharray="1 3"/>
<line x1="1248.0" y1="500.0" x2="1248.0" y2="524.0" stroke="#d9d9d9" stroke-width="1" stroke-dasharray="1 3"/>
<text x="1064.8" y="521.0" font-size="9.2" fill="#555" text-anchor="middle" font-weight="normal" >2023</text>
<text x="1225.2" y="521.0" font-size="9.2" fill="#555" text-anchor="middle" font-weight="normal" >2024</text>
<text x="945.6" y="543.6" font-size="9.1" fill="#555" text-anchor="start" font-weight="bold" >Property</text>
<circle cx="994.2" cy="540.3" r="3.7" fill="#2a5aa8"/>
<text x="999.2" y="543.6" font-size="9.25" fill="#555" text-anchor="start" font-weight="normal" >The Levante Parliament</text>
<circle cx="1107" cy="540.3" r="3.7" fill="#4d8fd6"/>
<text x="1112.0" y="543.6" font-size="9.25" fill="#555" text-anchor="start" font-weight="normal" >The Levante Rathaus</text>
<line x1="345.5" y1="588.4" x2="345.5" y2="752.9" stroke="#d9d9d9" stroke-width="1" stroke-dasharray="1 3"/>
<line x1="417.2" y1="588.4" x2="417.2" y2="752.9" stroke="#d9d9d9" stroke-width="1" stroke-dasharray="1 3"/>
<line x1="489.2" y1="588.4" x2="489.2" y2="752.9" stroke="#d9d9d9" stroke-width="1" stroke-dasharray="1 3"/>
<rect x="345.5" y="606.4" width="116.4" height="35.5" fill="#2a5aa8" />
<text x="338.0" y="627.1" font-size="8.4" fill="#555" text-anchor="end" font-weight="normal" >Booking.com</text>
<text x="403.7" y="627.1" font-size="8.4" fill="#fff" text-anchor="middle" font-weight="normal" >162.76 €</text>
<rect x="345.5" y="654.0" width="109.2" height="35.5" fill="#5680c0" />
<text x="338.0" y="674.8" font-size="8.4" fill="#555" text-anchor="end" font-weight="normal" >Direct</text>
<text x="400.1" y="674.8" font-size="8.4" fill="#fff" text-anchor="middle" font-weight="normal" >152.75 €</text>
<rect x="345.5" y="701.6" width="96.3" height="35.3" fill="#a9bfe0" />
<text x="338.0" y="722.2" font-size="8.4" fill="#555" text-anchor="end" font-weight="normal" >Expedia</text>
<text x="393.6" y="722.2" font-size="8.4" fill="#fff" text-anchor="middle" font-weight="normal" >134.63 €</text>
<text x="345.5" y="770.0" font-size="8.6" fill="#555" text-anchor="middle" font-weight="normal" >0 €</text>
<text x="417.2" y="770.0" font-size="8.6" fill="#555" text-anchor="middle" font-weight="normal" >100 €</text>
<text x="489.2" y="770.0" font-size="8.6" fill="#555" text-anchor="middle" font-weight="normal" >200 €</text>
<line x1="545.0" y1="638.7" x2="882.0" y2="638.7" stroke="#d9d9d9" stroke-width="1" stroke-dasharray="1 3"/>
<line x1="545.0" y1="709.5" x2="882.0" y2="709.5" stroke="#d9d9d9" stroke-width="1" stroke-dasharray="1 3"/>
<text x="539.2" y="641.7" font-size="9.1" fill="#555" text-anchor="end" font-weight="normal" >200 €</text>
<text x="539.2" y="712.5" font-size="9.1" fill="#555" text-anchor="end" font-weight="normal" >100 €</text>
<line x1="547.8" y1="673.4" x2="879.3" y2="673.4" stroke="#6f90cc" stroke-width="1.6" stroke-dasharray="4 3"/>
<polyline points="555.8,700.2 577.0,704.7 598.1,699.9 619.3,683.9 640.5,671.8 661.6,678.0 682.8,694.0 704.0,695.9 725.2,673.2 746.3,682.8 767.5,682.3 788.7,637.9 809.8,694.0 831.0,695.9 852.2,674.0" fill="none" stroke="#8fd0f7" stroke-width="2" stroke-linejoin="round"/>
<polyline points="555.8,686.8 577.0,689.5 598.1,686.0 619.3,662.8 640.5,666.5 661.6,667.3 682.8,670.0 704.0,677.5 725.2,657.4 746.3,671.3 767.5,671.3 788.7,645.4 809.8,693.2 831.0,688.7 852.2,656.6 873.3,647.2" fill="none" stroke="#4d8fd6" stroke-width="2" stroke-linejoin="round"/>
<polyline points="555.8,687.9 577.0,690.8 598.1,685.2 619.3,659.3 640.5,658.0 661.6,660.3 682.8,661.1 704.0,668.6 725.2,650.5 746.3,660.1 767.5,659.5 788.7,618.4 809.8,681.2 831.0,670.0 852.2,663.8" fill="none" stroke="#1f4e9c" stroke-width="2" stroke-linejoin="round"/>
<text transform="translate(559.0,714.5) rotate(-90)" font-size="9.2" fill="#555" text-anchor="end">Jan</text>
<text transform="translate(580.2,714.5) rotate(-90)" font-size="9.2" fill="#555" text-anchor="end">Feb</text>
<text transform="translate(601.3,714.5) rotate(-90)" font-size="9.2" fill="#555" text-anchor="end">Mar</text>
<text transform="translate(622.5,714.5) rotate(-90)" font-size="9.2" fill="#555" text-anchor="end">Apr</text>
<text transform="translate(643.7,714.5) rotate(-90)" font-size="9.2" fill="#555" text-anchor="end">May</text>
<text transform="translate(664.9,714.5) rotate(-90)" font-size="9.2" fill="#555" text-anchor="end">Jun</text>
<text transform="translate(686.0,714.5) rotate(-90)" font-size="9.2" fill="#555" text-anchor="end">Jul</text>
<text transform="translate(707.2,714.5) rotate(-90)" font-size="9.2" fill="#555" text-anchor="end">Aug</text>
<text transform="translate(728.4,714.5) rotate(-90)" font-size="9.2" fill="#555" text-anchor="end">Sep</text>
<text transform="translate(749.5,714.5) rotate(-90)" font-size="9.2" fill="#555" text-anchor="end">Oct</text>
<text transform="translate(770.7,714.5) rotate(-90)" font-size="9.2" fill="#555" text-anchor="end">Nov</text>
<text transform="translate(791.9,714.5) rotate(-90)" font-size="9.2" fill="#555" text-anchor="end">Dec</text>
<text transform="translate(813.0,714.5) rotate(-90)" font-size="9.2" fill="#555" text-anchor="end">Jan</text>
<text transform="translate(834.2,714.5) rotate(-90)" font-size="9.2" fill="#555" text-anchor="end">Feb</text>
<text transform="translate(855.4,714.5) rotate(-90)" font-size="9.2" fill="#555" text-anchor="end">Mar</text>
<text transform="translate(876.5,714.5) rotate(-90)" font-size="9.2" fill="#555" text-anchor="end">Apr</text>
<line x1="545.0" y1="714.0" x2="545.0" y2="750.0" stroke="#d9d9d9" stroke-width="1" stroke-dasharray="1 3"/>
<line x1="798.0" y1="714.0" x2="798.0" y2="750.0" stroke="#d9d9d9" stroke-width="1" stroke-dasharray="1 3"/>
<line x1="880.0" y1="714.0" x2="880.0" y2="750.0" stroke="#d9d9d9" stroke-width="1" stroke-dasharray="1 3"/>
<text x="671.6" y="745.7" font-size="9.2" fill="#555" text-anchor="middle" font-weight="normal" >2023</text>
<text x="840.6" y="745.7" font-size="9.2" fill="#555" text-anchor="middle" font-weight="normal" >2024</text>
<text x="603.4" y="767.7" font-size="9.1" fill="#555" text-anchor="start" font-weight="bold" >Source</text>
<circle cx="644.8" cy="764.4" r="3.7" fill="#2a5aa8"/>
<text x="649.8" y="767.7" font-size="9.25" fill="#555" text-anchor="start" font-weight="normal" >Booking.com</text>
<circle cx="713" cy="764.4" r="3.7" fill="#4d8fd6"/>
<text x="718.0" y="767.7" font-size="9.25" fill="#555" text-anchor="start" font-weight="normal" >Direct</text>
<circle cx="750.5" cy="764.4" r="3.7" fill="#8fd0f7"/>
<text x="755.5" y="767.7" font-size="9.25" fill="#555" text-anchor="start" font-weight="normal" >Expedia</text>
<line x1="930.0" y1="603.9" x2="1255.0" y2="603.9" stroke="#d9d9d9" stroke-width="1" stroke-dasharray="1 3"/>
<text x="921.6" y="606.9" font-size="9.1" fill="#555" text-anchor="end" font-weight="normal" >100 %</text>
<line x1="930.0" y1="656.6" x2="1255.0" y2="656.6" stroke="#d9d9d9" stroke-width="1" stroke-dasharray="1 3"/>
<text x="921.6" y="659.6" font-size="9.1" fill="#555" text-anchor="end" font-weight="normal" >50 %</text>
<line x1="930.0" y1="709.5" x2="1255.0" y2="709.5" stroke="#d9d9d9" stroke-width="1" stroke-dasharray="1 3"/>
<text x="921.6" y="712.5" font-size="9.1" fill="#555" text-anchor="end" font-weight="normal" >0 %</text>
<line x1="930.5" y1="630.1" x2="1254" y2="630.1" stroke="#6f90cc" stroke-width="1.6" stroke-dasharray="4 3"/>
<polyline points="939.3,639.8 959.8,630.4 980.4,635.2 1000.9,617.8 1021.4,629.1 1042.0,615.2 1062.5,617.3 1083.0,622.4 1103.5,616.5 1124.1,613.0 1144.6,634.1 1165.1,609.3 1185.7,651.8 1206.2,659.3 1226.7,686.8 1247.2,659.3" fill="none" stroke="#4d8fd6" stroke-width="2" stroke-linejoin="round"/>
<polyline points="939.3,643.2 959.8,643.2 980.4,623.2 1000.9,612.0 1021.4,615.7 1042.0,609.3 1062.5,617.0 1083.0,610.1 1103.5,610.9 1124.1,609.0 1144.6,615.4 1165.1,606.6 1185.7,639.2 1206.2,641.9 1226.7,699.4" fill="none" stroke="#1f4e9c" stroke-width="2" stroke-linejoin="round"/>
<text transform="translate(941.5,714.5) rotate(-90)" font-size="9.2" fill="#555" text-anchor="end">Jan</text>
<text transform="translate(962.0,714.5) rotate(-90)" font-size="9.2" fill="#555" text-anchor="end">Feb</text>
<text transform="translate(982.6,714.5) rotate(-90)" font-size="9.2" fill="#555" text-anchor="end">Mar</text>
<text transform="translate(1003.1,714.5) rotate(-90)" font-size="9.2" fill="#555" text-anchor="end">Apr</text>
<text transform="translate(1023.6,714.5) rotate(-90)" font-size="9.2" fill="#555" text-anchor="end">May</text>
<text transform="translate(1044.2,714.5) rotate(-90)" font-size="9.2" fill="#555" text-anchor="end">Jun</text>
<text transform="translate(1064.7,714.5) rotate(-90)" font-size="9.2" fill="#555" text-anchor="end">Jul</text>
<text transform="translate(1085.2,714.5) rotate(-90)" font-size="9.2" fill="#555" text-anchor="end">Aug</text>
<text transform="translate(1105.7,714.5) rotate(-90)" font-size="9.2" fill="#555" text-anchor="end">Sep</text>
<text transform="translate(1126.3,714.5) rotate(-90)" font-size="9.2" fill="#555" text-anchor="end">Oct</text>
<text transform="translate(1146.8,714.5) rotate(-90)" font-size="9.2" fill="#555" text-anchor="end">Nov</text>
<text transform="translate(1167.3,714.5) rotate(-90)" font-size="9.2" fill="#555" text-anchor="end">Dec</text>
<text transform="translate(1187.9,714.5) rotate(-90)" font-size="9.2" fill="#555" text-anchor="end">Jan</text>
<text transform="translate(1208.4,714.5) rotate(-90)" font-size="9.2" fill="#555" text-anchor="end">Feb</text>
<text transform="translate(1228.9,714.5) rotate(-90)" font-size="9.2" fill="#555" text-anchor="end">Mar</text>
<text transform="translate(1249.5,714.5) rotate(-90)" font-size="9.2" fill="#555" text-anchor="end">Apr</text>
<line x1="929.0" y1="714.0" x2="929.0" y2="750.0" stroke="#d9d9d9" stroke-width="1" stroke-dasharray="1 3"/>
<line x1="1175.0" y1="714.0" x2="1175.0" y2="750.0" stroke="#d9d9d9" stroke-width="1" stroke-dasharray="1 3"/>
<line x1="1254.0" y1="714.0" x2="1254.0" y2="750.0" stroke="#d9d9d9" stroke-width="1" stroke-dasharray="1 3"/>
<text x="1051.5" y="745.7" font-size="9.2" fill="#555" text-anchor="middle" font-weight="normal" >2023</text>
<text x="1215.5" y="745.7" font-size="9.2" fill="#555" text-anchor="middle" font-weight="normal" >2024</text>
<text x="946.0" y="767.7" font-size="9.1" fill="#555" text-anchor="start" font-weight="bold" >Location</text>
<circle cx="994.6" cy="764.4" r="3.7" fill="#2a5aa8"/>
<text x="999.6" y="767.7" font-size="9.25" fill="#555" text-anchor="start" font-weight="normal" >The Levante Parliament</text>
<circle cx="1107" cy="764.4" r="3.7" fill="#4d8fd6"/>
<text x="1112.0" y="767.7" font-size="9.25" fill="#555" text-anchor="start" font-weight="normal" >The Levante Rathaus</text></svg>
</body></html>
